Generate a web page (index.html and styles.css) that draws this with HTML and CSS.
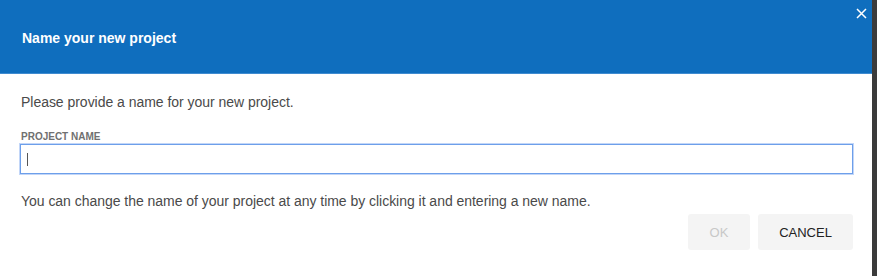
FILE: index.html
```html
<!DOCTYPE html>
<html lang="en">
<head>
<meta charset="utf-8">
<title>Name your new project</title>
<link rel="stylesheet" href="styles.css">
</head>
<body>
<div class="dialog">
  <header class="dialog-header">
    <h1 class="dialog-title">Name your new project</h1>
    <button class="close" aria-label="Close">
      <svg width="11" height="11" viewBox="0 0 11 11"><path d="M1 1 L10 10 M10 1 L1 10" stroke="#fff" stroke-width="1.5" fill="none"/></svg>
    </button>
  </header>
  <div class="dialog-body">
    <p class="intro">Please provide a name for your new project.</p>
    <label class="field-label" for="pname">PROJECT NAME</label>
    <div class="input"><span class="caret"></span></div>
    <p class="hint">You can change the name of your project at any time by clicking it and entering a new name.</p>
    <div class="actions">
      <button class="btn btn-ok" disabled>OK</button>
      <button class="btn btn-cancel">CANCEL</button>
    </div>
  </div>
</div>
<div class="edge"></div>
</body>
</html>
```
FILE: styles.css
```css
html, body {
  margin: 0;
  padding: 0;
  height: 100%;
  background: #fff;
}
body {
  display: flex;
  font-family: "Liberation Sans", Arial, sans-serif;
  overflow: hidden;
}
.dialog {
  flex: 1;
  display: flex;
  flex-direction: column;
}
.edge {
  width: 5px;
  background: #3b3b3b;
}
.dialog-header {
  height: 73px;
  background: #0f6ebe;
  border-bottom: 1px solid #3f8bd0;
  display: flex;
  align-items: center;
  position: relative;
  padding-left: 22px;
}
.dialog-title {
  margin: 0;
  font-size: 14px;
  font-weight: bold;
  color: #fff;
  line-height: 16px;
  padding-top: 3px;
}
.close {
  position: absolute;
  top: 8px;
  right: 5px;
  width: 11px;
  height: 11px;
  padding: 0;
  border: 0;
  background: none;
  display: flex;
}
.dialog-body {
  padding: 20px 19px 0 20px;
  display: flex;
  flex-direction: column;
}
.intro, .hint {
  margin: 0;
  font-size: 14px;
  line-height: 16px;
  color: #4a4a4a;
  padding-left: 1px;
  letter-spacing: -0.03px;
}
.field-label {
  margin-top: 21px;
  font-size: 10px;
  line-height: 12px;
  font-weight: bold;
  color: #707070;
  padding-left: 1px;
}
.input {
  margin-top: 1px;
  height: 28px;
  border: 1px solid #6d9fea;
  box-shadow: 0 0 0 1px rgba(120, 165, 240, 0.45);
  display: flex;
  align-items: center;
  padding-left: 6px;
}
.caret {
  width: 1px;
  height: 13px;
  background: #555;
}
.hint {
  margin-top: 19px;
}
.actions {
  margin-top: 5px;
  display: flex;
  justify-content: flex-end;
  gap: 8px;
}
.btn {
  height: 36px;
  border: 0;
  border-radius: 3px;
  background: #f4f4f4;
  font-family: "Liberation Sans", Arial, sans-serif;
  font-size: 13px;
  padding: 0;
}
.btn-ok {
  width: 62px;
  color: #c8c8c8;
}
.btn-cancel {
  width: 95px;
  color: #222;
}
```
